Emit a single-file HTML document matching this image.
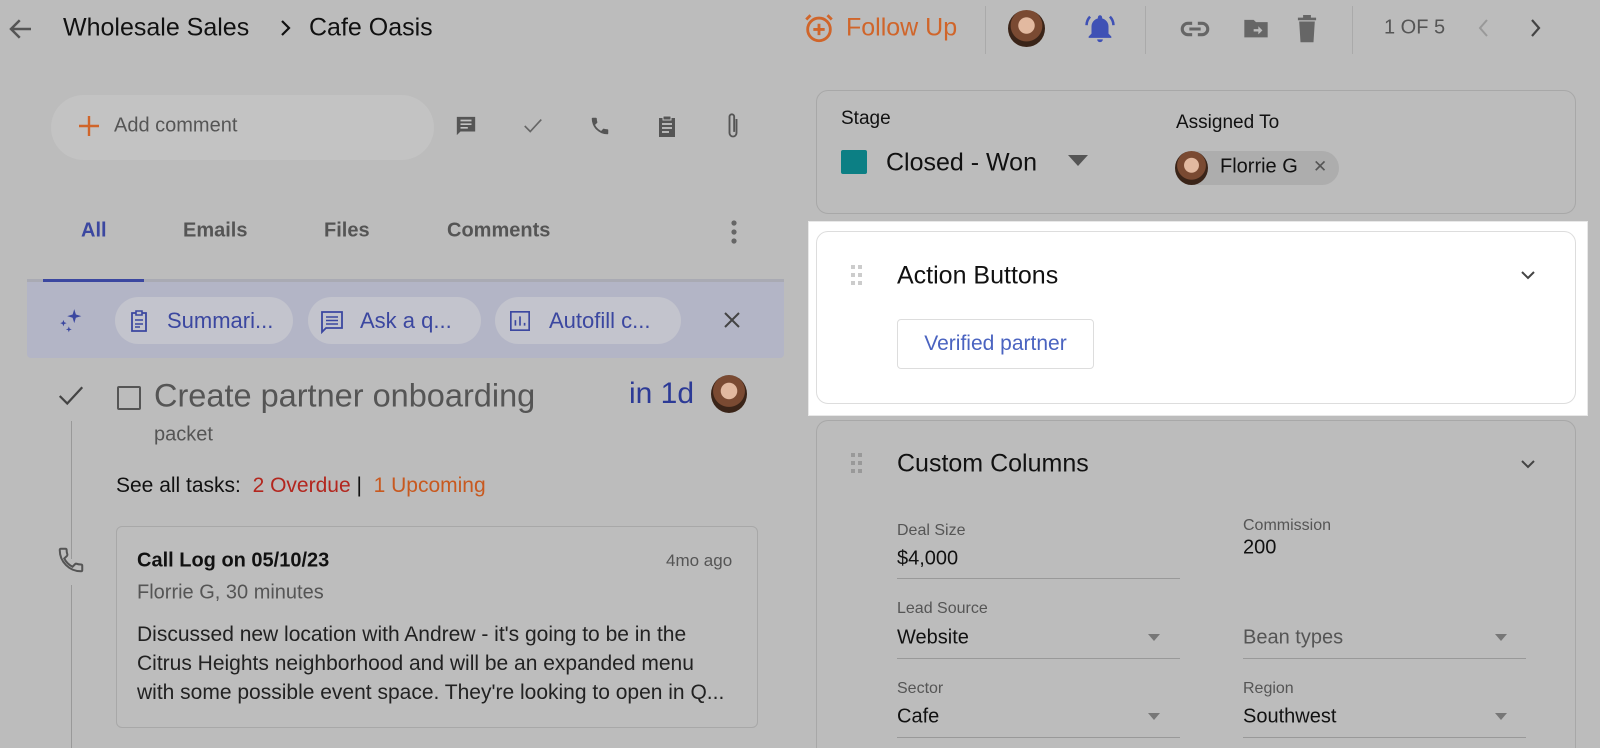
<!DOCTYPE html>
<html style="width:1600px;height:748px;overflow:hidden"><head><meta charset="utf-8"><style>
*{margin:0;padding:0;box-sizing:border-box}
body{width:1600px;height:748px;background:#bcbcbc;font-family:"Liberation Sans",sans-serif;position:relative;overflow:hidden;color:#111}
.a{position:absolute;white-space:nowrap}
.vc{transform:translateY(-50%)}
svg{position:absolute}
.div{position:absolute;width:1px;background:#aaa;top:6px;height:48px}
.chip{position:absolute;top:297px;height:47px;border-radius:24px;background:#c3c4cd;color:#3b47a0;font-size:22px;line-height:47px}
.lbl{position:absolute;font-size:16px;color:#555}
.val{position:absolute;font-size:20px;color:#111}
.ul{position:absolute;height:1px;background:#999}
.tri{position:absolute;width:0;height:0;border-left:6px solid transparent;border-right:6px solid transparent;border-top:7px solid #777}
.av{position:absolute;border-radius:50%;background:radial-gradient(circle at 50% 42%,#e2b9a0 0 28%,#7a4a32 30% 55%,#3a2418 57%)}
</style></head><body>
<svg style="left:6px;top:14px" width="30" height="30" viewBox="0 0 24 24"><path d="M20 12H5M11 5l-7 7 7 7" fill="none" stroke="#555" stroke-width="2"/></svg>
<div class="a vc" style="left:63px;top:28px;font-size:25px">Wholesale Sales</div>
<svg style="left:278px;top:18px" width="16" height="20" viewBox="0 0 16 20"><path d="M4 3l7 7-7 7" fill="none" stroke="#111" stroke-width="2.2"/></svg>
<div class="a vc" style="left:309px;top:28px;font-size:25px">Cafe Oasis</div>

<svg style="left:802px;top:11px" width="34" height="34" viewBox="0 0 24 24"><circle cx="12" cy="13" r="8" fill="none" stroke="#d0652a" stroke-width="2"/><path d="M12 9v8M8 13h8M3 6l3-3M21 6l-3-3" stroke="#d0652a" stroke-width="2" fill="none"/></svg>
<div class="a vc" style="left:846px;top:28px;font-size:25px;color:#d0652a">Follow Up</div>
<div class="div" style="left:985px"></div>
<div class="av" style="left:1008px;top:10px;width:37px;height:37px"></div>
<svg style="left:1083px;top:11px" width="34" height="34" viewBox="0 0 24 24"><path d="M12 3a1.5 1.5 0 0 1 1.5 1.5v.7A6 6 0 0 1 18 11v5l2 2v1H4v-1l2-2v-5a6 6 0 0 1 4.5-5.8v-.7A1.5 1.5 0 0 1 12 3zM10 20h4a2 2 0 0 1-4 0z" fill="#3f51b5"/><path d="M5 4a9 9 0 0 0-2.5 6M19 4a9 9 0 0 1 2.5 6" stroke="#3f51b5" stroke-width="1.8" fill="none"/></svg>
<div class="div" style="left:1145px"></div>
<svg style="left:1177px;top:12px" width="36" height="34" viewBox="0 0 24 24"><path d="M10 8H7a4 4 0 0 0 0 8h3M14 8h3a4 4 0 0 1 0 8h-3M8 12h8" stroke="#666" stroke-width="2.2" fill="none"/></svg>
<svg style="left:1242px;top:14px" width="28" height="28" viewBox="0 0 24 24"><path d="M2 5h8l2 2h10v13H2z" fill="#666"/><path d="M10 13h4v-2.5l3.5 3.5-3.5 3.5V15h-4z" fill="#bcbcbc"/></svg>
<svg style="left:1294px;top:12px" width="26" height="32" viewBox="0 0 20 24"><path d="M3 4h14v2H3zM7 2h6v2H7zM4 7h12l-1 16H5z" fill="#666"/></svg>
<div class="div" style="left:1352px"></div>
<div class="a vc" style="left:1384px;top:28px;font-size:20px;color:#555">1 OF 5</div>
<svg style="left:1474px;top:17px" width="20" height="22" viewBox="0 0 20 22"><path d="M13 3l-7 8 7 8" fill="none" stroke="#999" stroke-width="2"/></svg>
<svg style="left:1525px;top:17px" width="20" height="22" viewBox="0 0 20 22"><path d="M7 3l7 8-7 8" fill="none" stroke="#444" stroke-width="2.2"/></svg>

<div class="a" style="left:51px;top:95px;width:383px;height:65px;border-radius:33px;background:#c3c3c3"></div>
<svg style="left:77px;top:114px" width="24" height="24" viewBox="0 0 24 24"><path d="M12 2v20M2 12h20" stroke="#d0652a" stroke-width="2.4"/></svg>
<div class="a vc" style="left:114px;top:126px;font-size:20px;color:#555">Add comment</div>
<svg style="left:455px;top:115px" width="22" height="22" viewBox="0 0 24 24"><path d="M2 2h20v16H6l-4 4z" fill="#555"/><path d="M6 6h12M6 10h12M6 14h8" stroke="#c3c3c3" stroke-width="1.8"/></svg>
<svg style="left:522px;top:116px" width="22" height="20" viewBox="0 0 24 20"><path d="M3 10l6 6L21 3" stroke="#666" stroke-width="1.8" fill="none"/></svg>
<svg style="left:589px;top:115px" width="22" height="22" viewBox="0 0 24 24"><path d="M6.6 10.8a15 15 0 0 0 6.6 6.6l2.2-2.2c.3-.3.7-.4 1-.2 1.1.4 2.3.6 3.6.6.6 0 1 .4 1 1V20c0 .6-.4 1-1 1A17 17 0 0 1 3 4c0-.6.4-1 1-1h3.5c.6 0 1 .4 1 1 0 1.3.2 2.5.6 3.6.1.3 0 .7-.2 1z" fill="#555"/></svg>
<svg style="left:656px;top:114px" width="22" height="24" viewBox="0 0 20 24"><path d="M2 4h16v19H2z" fill="#555"/><path d="M6 2h8v4H6z" fill="#555" stroke="#c3c3c3" stroke-width="1"/><path d="M5 10h10M5 14h10M5 18h7" stroke="#c3c3c3" stroke-width="1.8"/></svg>
<svg style="left:724px;top:112px" width="18" height="28" viewBox="0 0 12 24"><path d="M9 6v12a3 3 0 0 1-6 0V4a2 2 0 0 1 4 0v13" fill="none" stroke="#555" stroke-width="1.6"/></svg>

<div class="a vc" style="left:81px;top:231px;font-size:20px;color:#3b47a0;font-weight:bold">All</div>
<div class="a vc" style="left:183px;top:231px;font-size:20px;color:#555;font-weight:bold">Emails</div>
<div class="a vc" style="left:324px;top:231px;font-size:20px;color:#555;font-weight:bold">Files</div>
<div class="a vc" style="left:447px;top:231px;font-size:20px;color:#555;font-weight:bold">Comments</div>
<svg style="left:729px;top:218px" width="10" height="28" viewBox="0 0 10 28"><circle cx="5" cy="5" r="2.6" fill="#666"/><circle cx="5" cy="14" r="2.6" fill="#666"/><circle cx="5" cy="23" r="2.6" fill="#666"/></svg>
<div class="a" style="left:27px;top:279px;width:757px;height:79px;background:#b3b5c6;border-radius:0 0 4px 4px"></div>
<div class="a" style="left:27px;top:279px;width:757px;height:3px;background:#a9aab3"></div>
<div class="a" style="left:43px;top:279px;width:101px;height:3px;background:#3b47a0"></div>
<svg style="left:58px;top:308px" width="26" height="26" viewBox="0 0 24 24"><path d="M15 1l1.5 5 5 1.5-5 1.5L15 14l-1.5-5-5-1.5 5-1.5zM5 11l.8 2.2 2.2.8-2.2.8L5 17l-.8-2.2L2 14l2.2-.8zM10 17l.7 2 2 .7-2 .7-.7 2-.7-2-2-.7 2-.7z" fill="#3b47a0"/></svg>
<div class="chip" style="left:115px;width:178px;padding-left:52px">Summari...</div>
<svg style="left:128px;top:309px" width="22" height="24" viewBox="0 0 20 24"><path d="M3 4h14v18H3z" fill="none" stroke="#3b47a0" stroke-width="1.8"/><path d="M7 2h6v4H7z" fill="#c3c4cd" stroke="#3b47a0" stroke-width="1.6"/><path d="M6 11h8M6 15h8M6 18h5" stroke="#3b47a0" stroke-width="1.6"/></svg>
<div class="chip" style="left:308px;width:173px;padding-left:52px">Ask a q...</div>
<svg style="left:320px;top:310px" width="24" height="24" viewBox="0 0 24 24"><path d="M2 2h20v16H6l-4 4z" fill="none" stroke="#3b47a0" stroke-width="1.8"/><path d="M6 7h12M6 10.5h12M6 14h12" stroke="#3b47a0" stroke-width="1.6"/></svg>
<div class="chip" style="left:495px;width:186px;padding-left:54px">Autofill c...</div>
<svg style="left:509px;top:310px" width="22" height="22" viewBox="0 0 24 24"><rect x="2" y="2" width="20" height="20" fill="none" stroke="#3b47a0" stroke-width="1.8"/><path d="M7 17v-6M12 17V7M17 17v-3" stroke="#3b47a0" stroke-width="1.8"/></svg>
<svg style="left:722px;top:310px" width="20" height="20" viewBox="0 0 20 20"><path d="M3 3l14 14M17 3L3 17" stroke="#444" stroke-width="2"/></svg>

<svg style="left:56px;top:383px" width="30" height="26" viewBox="0 0 24 20"><path d="M3 10l6 6L21 3" stroke="#444" stroke-width="1.8" fill="none"/></svg>
<div class="a" style="left:117px;top:386px;width:24px;height:24px;border:2.5px solid #555;border-radius:2px"></div>
<div class="a vc" style="left:154px;top:396px;font-size:32.5px;color:#555">Create partner onboarding</div>
<div class="a vc" style="left:629px;top:394px;font-size:30px;color:#2c3a96">in 1d</div>
<div class="av" style="left:711px;top:375px;width:36px;height:38px"></div>
<div class="a vc" style="left:154px;top:435px;font-size:20px;color:#555">packet</div>
<div class="a" style="left:71px;top:421px;width:1px;height:138px;background:#999"></div>
<div class="a" style="left:71px;top:585px;width:1px;height:163px;background:#999"></div>
<div class="a vc" style="left:116px;top:486px;font-size:21px">See all tasks:&nbsp; <span style="color:#b3261e">2 Overdue</span> | &nbsp;<span style="color:#c8591f">1 Upcoming</span></div>
<svg style="left:56px;top:545px" width="30" height="30" viewBox="0 0 24 24"><path d="M6.6 10.8a15 15 0 0 0 6.6 6.6l2.2-2.2c.3-.3.7-.4 1-.2 1.1.4 2.3.6 3.6.6.6 0 1 .4 1 1V20c0 .6-.4 1-1 1A17 17 0 0 1 3 4c0-.6.4-1 1-1h3.5c.6 0 1 .4 1 1 0 1.3.2 2.5.6 3.6.1.3 0 .7-.2 1z" fill="none" stroke="#555" stroke-width="1.6"/></svg>

<div class="a" style="left:116px;top:526px;width:642px;height:202px;border:1px solid #a8a8a8;border-radius:6px;background:#bdbdbd"></div>
<div class="a vc" style="left:137px;top:561px;font-size:20px;font-weight:bold">Call Log on 05/10/23</div>
<div class="a vc" style="left:666px;top:561px;font-size:17px;color:#555">4mo ago</div>
<div class="a vc" style="left:137px;top:593px;font-size:20px;color:#555">Florrie G, 30 minutes</div>
<div class="a" style="left:137px;top:620px;font-size:21px;line-height:29px;color:#222">Discussed new location with Andrew - it's going to be in the<br>Citrus Heights neighborhood and will be an expanded menu<br>with some possible event space. They're looking to open in Q...</div>

<div class="a" style="left:816px;top:90px;width:760px;height:124px;border:1px solid #a8a8a8;border-radius:12px"></div>
<div class="a vc" style="left:841px;top:119px;font-size:19px">Stage</div>
<div class="a vc" style="left:1176px;top:123px;font-size:19px">Assigned To</div>
<div class="a" style="left:841px;top:150px;width:26px;height:24px;background:#0c7f84;border-radius:2px"></div>
<div class="a vc" style="left:886px;top:163px;font-size:25px">Closed - Won</div>
<div class="tri" style="left:1068px;top:155px;border-left-width:10px;border-right-width:10px;border-top:11px solid #555"></div>
<div class="a" style="left:1175px;top:151px;width:164px;height:34px;border-radius:17px;background:#adadad"></div>
<div class="av" style="left:1175px;top:151px;width:33px;height:34px"></div>
<div class="a vc" style="left:1220px;top:167px;font-size:20px">Florrie G</div>
<div class="a vc" style="left:1313px;top:167px;font-size:17px;color:#555">✕</div>

<div class="a" style="left:808px;top:221px;width:780px;height:195px;background:#fff;border:1px solid #e8e8e8"></div>
<div class="a" style="left:816px;top:231px;width:760px;height:173px;border:1px solid #ddd;border-radius:12px;background:#fff"></div>
<svg style="left:850px;top:264px" width="14" height="22" viewBox="0 0 14 22"><g fill="#ccc"><rect x="1" y="1" width="4" height="4"/><rect x="8" y="1" width="4" height="4"/><rect x="1" y="9" width="4" height="4"/><rect x="8" y="9" width="4" height="4"/><rect x="1" y="17" width="4" height="4"/><rect x="8" y="17" width="4" height="4"/></g></svg>
<div class="a vc" style="left:897px;top:276px;font-size:25px">Action Buttons</div>
<svg style="left:1519px;top:267px" width="18" height="16" viewBox="0 0 18 16"><path d="M3 5l6 6 6-6" stroke="#444" stroke-width="2" fill="none"/></svg>
<div class="a" style="left:897px;top:319px;width:197px;height:50px;border:1px solid #ddd;border-radius:4px;color:#4a63c0;font-size:21px;line-height:48px;text-align:center">Verified partner</div>

<div class="a" style="left:816px;top:420px;width:760px;height:330px;border:1px solid #a8a8a8;border-bottom:none;border-radius:12px 12px 0 0"></div>
<svg style="left:850px;top:452px" width="14" height="22" viewBox="0 0 14 22"><g fill="#999"><rect x="1" y="1" width="4" height="4"/><rect x="8" y="1" width="4" height="4"/><rect x="1" y="9" width="4" height="4"/><rect x="8" y="9" width="4" height="4"/><rect x="1" y="17" width="4" height="4"/><rect x="8" y="17" width="4" height="4"/></g></svg>
<div class="a vc" style="left:897px;top:464px;font-size:25px">Custom Columns</div>
<svg style="left:1519px;top:456px" width="18" height="16" viewBox="0 0 18 16"><path d="M3 5l6 6 6-6" stroke="#444" stroke-width="2" fill="none"/></svg>
<div class="lbl vc" style="left:897px;top:531px">Deal Size</div>
<div class="val vc" style="left:897px;top:559px">$4,000</div>
<div class="ul" style="left:897px;top:578px;width:283px"></div>
<div class="lbl vc" style="left:1243px;top:526px">Commission</div>
<div class="val vc" style="left:1243px;top:548px">200</div>
<div class="lbl vc" style="left:897px;top:609px">Lead Source</div>
<div class="val vc" style="left:897px;top:638px">Website</div>
<div class="tri" style="left:1148px;top:634px"></div>
<div class="ul" style="left:897px;top:658px;width:283px"></div>
<div class="val vc" style="left:1243px;top:638px;color:#555">Bean types</div>
<div class="tri" style="left:1495px;top:634px"></div>
<div class="ul" style="left:1243px;top:658px;width:283px"></div>
<div class="lbl vc" style="left:897px;top:689px">Sector</div>
<div class="val vc" style="left:897px;top:717px">Cafe</div>
<div class="tri" style="left:1148px;top:713px"></div>
<div class="ul" style="left:897px;top:737px;width:283px"></div>
<div class="lbl vc" style="left:1243px;top:689px">Region</div>
<div class="val vc" style="left:1243px;top:717px">Southwest</div>
<div class="tri" style="left:1495px;top:713px"></div>
<div class="ul" style="left:1243px;top:737px;width:283px"></div>
</body></html>
